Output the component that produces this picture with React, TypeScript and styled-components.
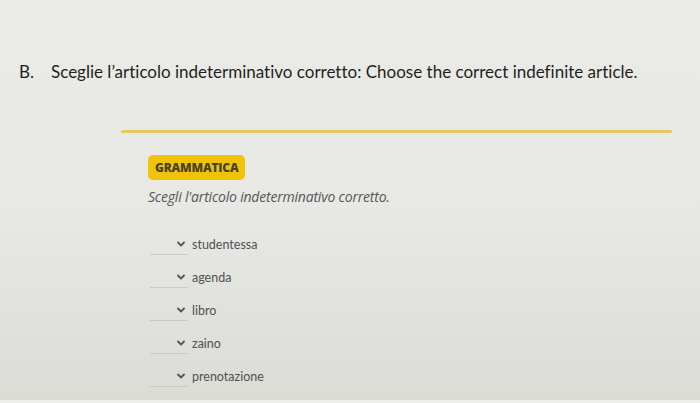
import React from "react";
import styled, { createGlobalStyle } from "styled-components";

const Global = createGlobalStyle`
  html, body { margin: 0; padding: 0; }
  body {
    width: 700px;
    height: 403px;
    overflow: hidden;
    background: #e6e7e2;
  }
`;

const Page = styled.div`
  width: 700px;
  height: 403px;
  box-sizing: border-box;
  background: linear-gradient(180deg, #eaebe6 0%, #e8e9e4 50%, #dbdcd6 99.2%, #eeefec 99.3%, #eeefec 100%);
  padding-top: 59px;
  display: flex;
  flex-direction: column;
`;

const Heading = styled.div`
  display: flex;
  padding-left: 19px;
  font-family: Lato, "Open Sans", sans-serif;
  font-size: 17px;
  font-variant-ligatures: none;
  color: #1f1f22;
  line-height: 25px;
`;

const Letter = styled.span`
  width: 32px;
`;

const Rule = styled.div`
  margin: 46px 28px 0 121px;
  height: 3px;
  border-radius: 2px;
  background: #e9c660;
`;

const Panel = styled.div`
  padding: 22px 0 0 148px;
  display: flex;
  flex-direction: column;
  align-items: flex-start;
`;

const Badge = styled.div`
  background: #f0c20a;
  border-radius: 5px;
  padding: 5px 7px 4px;
  font-family: "Open Sans", Lato, sans-serif;
  font-weight: 800;
  font-size: 12px;
  letter-spacing: -0.2px;
  color: #4a4328;
  line-height: 16px;
`;

const Instruction = styled.div`
  margin-top: 7px;
  font-family: "Open Sans", Lato, sans-serif;
  font-style: italic;
  font-size: 14px;
  color: #55565a;
  letter-spacing: -0.2px;
`;

const List = styled.div`
  margin-top: 30px;
  display: flex;
  flex-direction: column;
  gap: 14px;
`;

const Row = styled.div`
  display: flex;
  align-items: center;
  height: 19px;
`;

const Select = styled.div`
  width: 38px;
  height: 19px;
  box-sizing: border-box;
  border-bottom: 1px solid #c9cac6;
  margin-left: 2px;
  display: flex;
  align-items: center;
  justify-content: flex-end;
  padding-right: 3px;
  padding-bottom: 2px;
`;

const Word = styled.span`
  margin-left: 4px;
  font-family: Lato, "Open Sans", sans-serif;
  font-size: 12.5px;
  color: #505155;
  margin-bottom: 2px;
`;

const Chevron = () => (
  <svg width="8" height="6" viewBox="0 0 8 6">
    <path d="M1 1.5 L4 4.5 L7 1.5" fill="none" stroke="#55565a" strokeWidth="1.8" strokeLinecap="round" strokeLinejoin="round" />
  </svg>
);

const words = ["studentessa", "agenda", "libro", "zaino", "prenotazione"];

export default function App() {
  return (
    <Page>
      <Global />
      <Heading>
        <Letter>B.</Letter>
        <span>Sceglie l’articolo indeterminativo corretto: Choose the correct indefinite article.</span>
      </Heading>
      <Rule />
      <Panel>
        <Badge>GRAMMATICA</Badge>
        <Instruction>Scegli l'articolo indeterminativo corretto.</Instruction>
        <List>
          {words.map((w) => (
            <Row key={w}>
              <Select>
                <Chevron />
              </Select>
              <Word>{w}</Word>
            </Row>
          ))}
        </List>
      </Panel>
    </Page>
  );
}
